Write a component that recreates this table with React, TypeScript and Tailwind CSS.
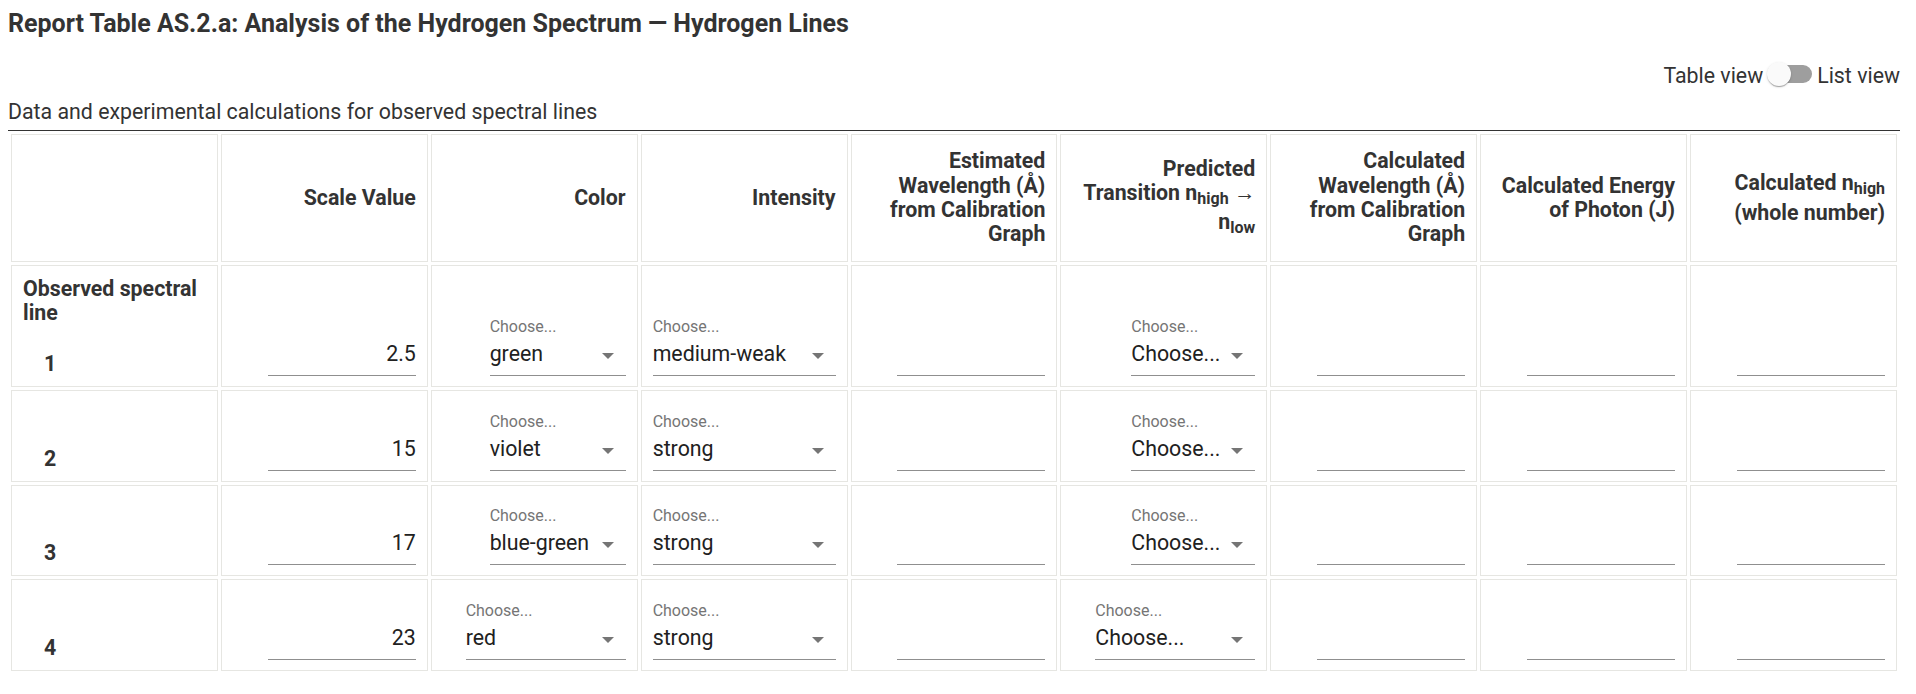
import React from "react";

const BORDER = "border border-[#e6e6e2]";

function Arrow() {
  return (
    <svg
      className="absolute right-[12px] bottom-[16px]"
      width="12"
      height="6"
      viewBox="0 0 12 6"
    >
      <path d="M0 0 L12 0 L6 6 Z" fill="#757575" />
    </svg>
  );
}

function SelectField({ value, widthClass }: { value: string; widthClass: string }) {
  return (
    <div className={`relative inline-block text-left ${widthClass}`}>
      <div className="text-[16px] leading-[19px] text-[#757575]">Choose...</div>
      <div className="relative border-b border-[#8f8f8f] pt-[5px] pb-[9px] pr-[40px] text-[21.33px] leading-[25px] text-[#212121] whitespace-nowrap">
        {value}
        <Arrow />
      </div>
    </div>
  );
}

function TextField({ value }: { value?: string }) {
  return (
    <div className="inline-block w-[148px] border-b border-[#8f8f8f] pt-[5px] pb-[9px] text-right text-[21.33px] leading-[25px] text-[#212121]">
      {value ?? "\u00a0"}
    </div>
  );
}

type Row = {
  n: string;
  scale: string;
  color: string;
  colorW: string;
  intensity: string;
  predW: string;
  h: string;
  first?: boolean;
};

const rows: Row[] = [
  { n: "1", scale: "2.5", color: "green", colorW: "w-[136px]", intensity: "medium-weak", predW: "w-[124px]", h: "h-[122px]", first: true },
  { n: "2", scale: "15", color: "violet", colorW: "w-[136px]", intensity: "strong", predW: "w-[124px]", h: "h-[92px]" },
  { n: "3", scale: "17", color: "blue-green", colorW: "w-[136px]", intensity: "strong", predW: "w-[124px]", h: "h-[91px]" },
  { n: "4", scale: "23", color: "red", colorW: "w-[160px]", intensity: "strong", predW: "w-[160px]", h: "h-[92px]" },
];

const TH = `${BORDER} px-[11px] align-middle text-right font-bold text-[21.33px] leading-[24.3px] text-[#333] whitespace-nowrap`;
const TD = `${BORDER} px-[11px] pt-0 pb-[10px] align-bottom text-right`;

export default function App() {
  return (
    <div className="font-[family-name:Roboto,sans-serif] bg-white pl-2 pr-4 pt-2 pb-4 text-[#333]">
      <h1 className="text-[25px] leading-[32px] font-bold text-[#333]">
        Report Table AS.2.a: Analysis of the Hydrogen Spectrum — Hydrogen Lines
      </h1>

      <div className="mt-[11px] flex h-12 items-center justify-end text-[21.33px] text-[#333]">
        <span className="translate-y-[1px]">Table view</span>
        <div className="relative ml-[4px] mr-[5px] h-[24px] w-[45px] -translate-y-[1px]">
          <div className="absolute left-[4px] right-0 top-[3px] h-[18px] rounded-full bg-[#9e9e9e]" />
          <div className="absolute left-0 top-0 h-[24px] w-[24px] rounded-full bg-[#fafafa] shadow-[0px_2px_1px_-1px_rgba(0,0,0,0.2),0px_1px_1px_0px_rgba(0,0,0,0.14),0px_1px_3px_0px_rgba(0,0,0,0.12)]" />
        </div>
        <span className="translate-y-[1px]">List view</span>
      </div>

      <div className="border-b border-[#333] pt-[1px] pb-[6px] text-[21.33px] leading-[24px] text-[#333]">
        Data and experimental calculations for observed spectral lines
      </div>

      <table className="w-full table-fixed border-separate border-spacing-[3px]">
        <thead>
          <tr className="h-[128px]">
            <th className={TH}></th>
            <th className={TH}>Scale Value</th>
            <th className={TH}>Color</th>
            <th className={TH}>Intensity</th>
            <th className={TH}>
              Estimated
              <br />
              Wavelength (Å)
              <br />
              from Calibration
              <br />
              Graph
            </th>
            <th className={TH}>
              <div>Predicted</div>
              <div className="pb-[5px]">
                Transition n<sub>high</sub> →
              </div>
              <div className="pb-[5px]">
                n<sub>low</sub>
              </div>
            </th>
            <th className={TH}>
              Calculated
              <br />
              Wavelength (Å)
              <br />
              from Calibration
              <br />
              Graph
            </th>
            <th className={TH}>
              Calculated Energy
              <br />
              of Photon (J)
            </th>
            <th className={TH}>
              <div className="pb-[5px]">
                Calculated n<sub>high</sub>
              </div>
              <div>(whole number)</div>
            </th>
          </tr>
        </thead>
        <tbody>
          {rows.map((r) => (
            <tr key={r.n} className={r.h}>
              <td className={`${BORDER} px-[11px] pt-0 pb-[10px] align-bottom text-left font-bold text-[21.33px] leading-[24.3px] text-[#333]`}>
                {r.first && <div className="mb-[26px]">Observed spectral line</div>}
                <div className="pl-[21px]">{r.n}</div>
              </td>
              <td className={TD}>
                <TextField value={r.scale} />
              </td>
              <td className={TD}>
                <SelectField value={r.color} widthClass={r.colorW} />
              </td>
              <td className={TD}>
                <SelectField value={r.intensity} widthClass="w-full" />
              </td>
              <td className={TD}>
                <TextField />
              </td>
              <td className={TD}>
                <SelectField value="Choose..." widthClass={r.predW} />
              </td>
              <td className={TD}>
                <TextField />
              </td>
              <td className={TD}>
                <TextField />
              </td>
              <td className={TD}>
                <TextField />
              </td>
            </tr>
          ))}
        </tbody>
      </table>
    </div>
  );
}
